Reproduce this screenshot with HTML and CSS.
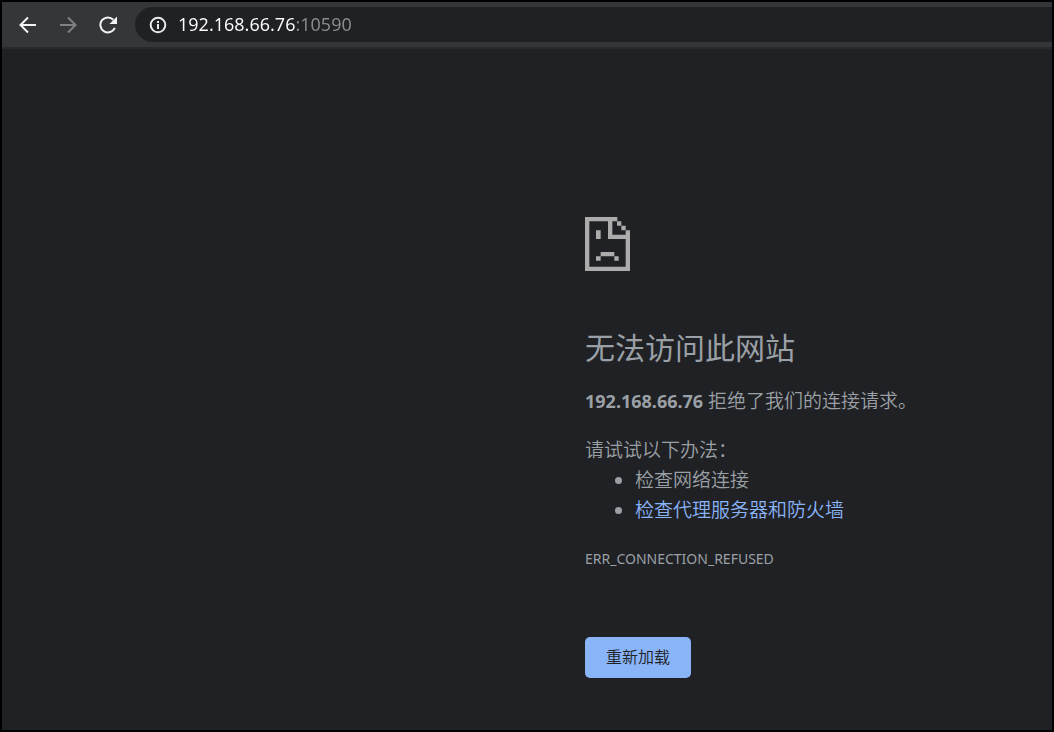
FILE: index.html
```html
<!DOCTYPE html>
<html lang="zh-CN">
<head>
    <meta charset="UTF-8">
    <meta name="viewport" content="width=device-width, initial-scale=1.0">
    <title>192.168.66.76</title>
    <link rel="stylesheet" href="styles.css">
</head>
<body>
    <!-- toolbar -->
    <header class="toolbar">
        <button class="nav-button" type="button" aria-label="后退">
            <svg width="18" height="18" viewBox="0 0 18 18"><path d="M17 9H2M9 1.500L1.500 9L9 16.500"/></svg>
        </button>
        <button class="nav-button disabled" type="button" aria-label="前进" disabled>
            <svg width="18" height="18" viewBox="0 0 18 18"><path d="M1 9H16M9 1.500L16.500 9L9 16.500"/></svg>
        </button>
        <button class="nav-button" type="button" aria-label="刷新">
            <svg width="18" height="18" viewBox="0 0 18 18"><path d="M15.800 11.800A7.500 7.500 0 1 1 14.300 3.700"/><path class="fill" d="M18 0.500V8H10.500Z"/></svg>
        </button>
        <div class="omnibox">
            <svg class="info" width="18" height="18" viewBox="0 0 18 18"><circle cx="9" cy="9" r="7.300"/><path d="M9 8V13M9 5V7"/></svg>
            <input class="address" type="text" value="192.168.66.76:10590" aria-label="地址" spellcheck="false">
        </div>
    </header>

    <!-- error page -->
    <main class="error-page">
        <svg class="sad-page" width="45" height="54" viewBox="0 0 135 162">
            <path d="M0 0H97V13H82V53H122V40H135V162H0ZM13 13V149H122V66H69V13Z" fill-rule="evenodd"/>
            <path d="M96 13H109V26H96ZM109 26H122V40H109ZM33 40H47V66H33ZM47 105H88V118H47ZM33 118H47V131H33ZM88 118H101V131H88Z"/>
        </svg>
        <h1>无法访问此网站</h1>
        <p class="summary"><strong>192.168.66.76</strong> 拒绝了我们的连接请求。</p>
        <div class="suggestions">
            <p>请试试以下办法：</p>
            <ul>
                <li>检查网络连接</li>
                <li><a href="#proxy">检查代理服务器和防火墙</a></li>
            </ul>
        </div>
        <div class="error-code">ERR_CONNECTION_REFUSED</div>
        <button class="reload" type="button" onclick="location.reload()">重新加载</button>
    </main>
</body>
</html>
```
FILE: styles.css
```css
* {
    box-sizing: border-box;
}
body {
    display: flex;
    flex-direction: column;
    min-height: 100vh;
    margin: 0;
    border: 2px solid #000;
    background-color: #202124;
    color: #9aa0a6;
    font-family: "Noto Sans", "Noto Sans CJK SC", sans-serif;
    font-size: 19px;
    line-height: 30px;
}
.toolbar {
    display: flex;
    align-items: center;
    padding: 5px 0 5px 6px;
    background-color: #35363a;
    border-bottom: 2px solid #292a2d;
}
.nav-button {
    display: flex;
    align-items: center;
    justify-content: center;
    width: 40px;
    height: 34px;
    padding: 0;
    border: none;
    background: none;
    color: #f1f3f4;
}
.nav-button.disabled {
    color: #7f8084;
}
.nav-button svg,
.info {
    fill: none;
    stroke: currentColor;
    stroke-width: 2;
}
.nav-button .fill {
    fill: currentColor;
    stroke: none;
}
.omnibox {
    display: flex;
    flex: 1;
    align-items: center;
    gap: 11px;
    height: 35px;
    margin-left: 7px;
    padding-left: 14px;
    border-radius: 18px 0 0 18px;
    background-color: #202124;
}
.info {
    color: #e8eaed;
}
/* host is white, port is dimmed */
.address {
    flex: 1;
    min-width: 0;
    padding: 0 0 2px;
    border: none;
    outline: none;
    background: linear-gradient(to right, #fff 117px, #898b8f 117px);
    -webkit-background-clip: text;
    background-clip: text;
    color: transparent;
    font-family: inherit;
    font-size: 18px;
}
.error-page {
    padding: 168px 20px 52px 583px;
}
.sad-page {
    display: block;
    fill: #acacac;
}
h1 {
    margin: 55px 0 16px;
    font-size: 30px;
    font-weight: 400;
    line-height: 44px;
}
p,
ul {
    margin: 0;
}
.summary,
.suggestions {
    margin-bottom: 19px;
    font-weight: 350;
}
strong {
    font-size: 18px;
    font-weight: 700;
}
ul {
    padding-left: 50px;
}
a {
    color: #8ab4f8;
    text-decoration: none;
}
.error-code {
    font-size: 14px;
}
.reload {
    margin-top: 63px;
    padding: 8px 21px;
    border: none;
    border-radius: 5px;
    background-color: #8ab4f8;
    color: #202124;
    font-family: inherit;
    font-size: 16px;
    font-weight: 350;
    line-height: 25px;
}
```
